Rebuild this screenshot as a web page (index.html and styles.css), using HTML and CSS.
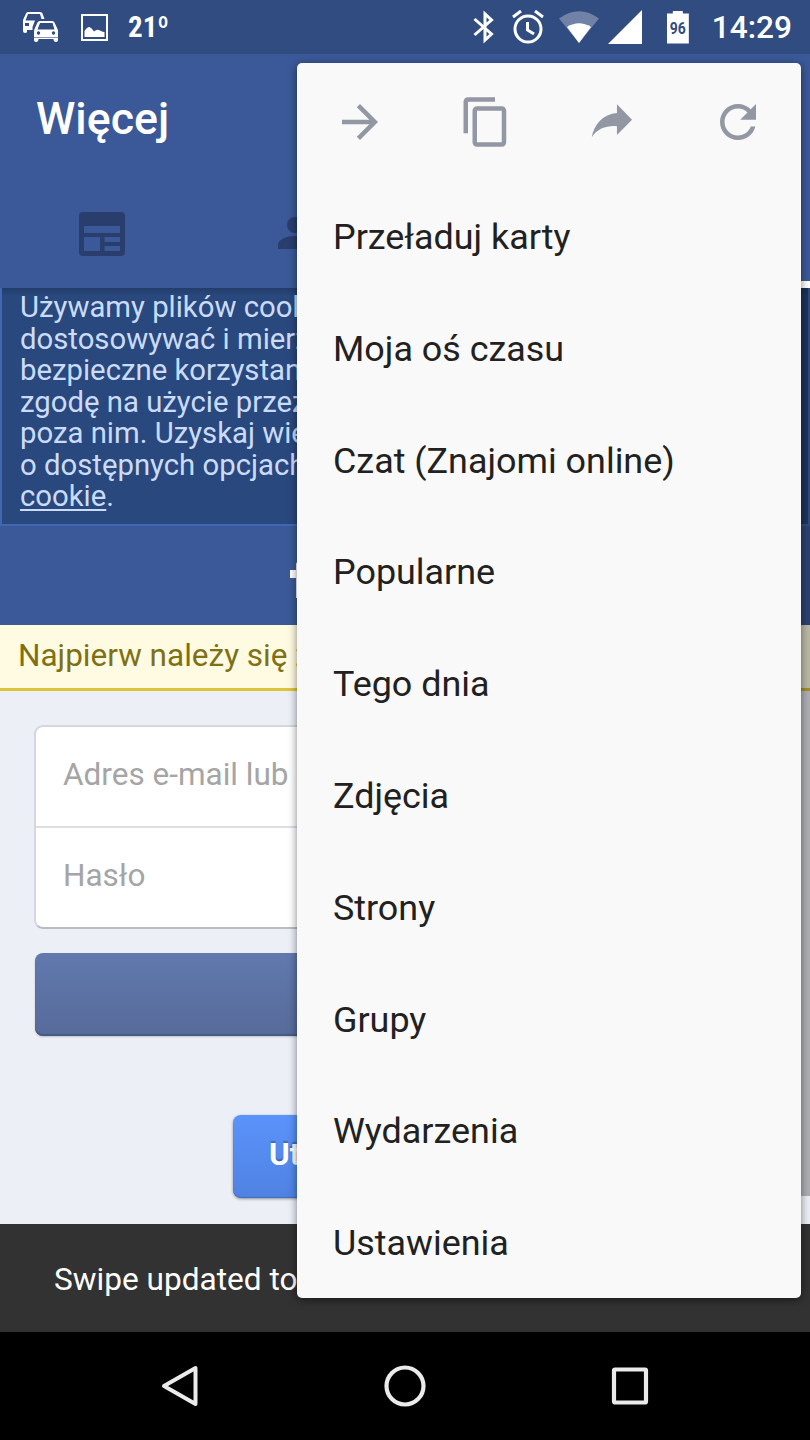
FILE: index.html
```html
<!DOCTYPE html>
<html lang="pl">
<head>
  <meta charset="UTF-8" />
  <meta name="viewport" content="width=device-width, initial-scale=1.0" />
  <title>Więcej</title>
  <link rel="stylesheet" href="styles.css">
</head>
<body>
  <div class="screen">
    <header class="status-bar">
      <div class="status-left">
        <svg class="icon-cars" width="38" height="32" viewBox="0 0 38 32">
          <path fill="#fff" fill-rule="evenodd" d="M1 8 L4 1.500 Q4.500 0 6 0 H18 Q20 0 20.500 1.500 L22.500 7 H19.500 L18 2 H6 L3.500 8.500 H13 L10.500 15 V18 H5 V20 Q4.500 21 3 21 Q1 21 1 19 Z M3 11 V14 H7 V11 Z"/>
          <path fill="#fff" fill-rule="evenodd" d="M12.500 17 L15.500 10.500 Q16 9 18 9 H30 Q32 9 32.500 10.500 L35.500 17 Q36 18 36 19 V28 Q36 30 34 30 Q31.500 30 31.500 27 H16.500 Q16.500 30 14 30 Q12 30 12 28 V19 Z M18 11 L15.500 17.500 H32.500 L30.500 11 Z"/>
          <circle cx="16.500" cy="21" r="1.700" fill="#314c80"/>
          <circle cx="31.500" cy="21" r="1.700" fill="#314c80"/>
          <path d="M12 25.500H36" stroke="#8797b8" stroke-width="1"/>
        </svg>
        <svg class="icon-photo" width="27" height="27" viewBox="0 0 27 27">
          <rect x="1" y="1" width="25" height="25" fill="none" stroke="#fff" stroke-width="2"/>
          <path fill="#fff" d="M3.500 23V17Q6 13 8.500 13 11 14 13 17.500 16 14.500 19 16.500 22 18 23.500 18V23Z"/>
        </svg>
        <span class="temperature">21º</span>
      </div>
      <div class="status-right">
        <svg class="icon-bt" width="22" height="34" viewBox="0 0 22 34">
          <path d="M1.500 9 L18.500 24 L12 30 V4 L18.500 10 L1.500 25" fill="none" stroke="#fff" stroke-width="3"/>
        </svg>
        <svg class="icon-alarm" width="32" height="34" viewBox="0 0 32 34">
          <circle cx="16" cy="19" r="13" fill="none" stroke="#fff" stroke-width="3"/>
          <path d="M15.500 12V20L22 24M1 7L9 1M23 1L31 7" fill="none" stroke="#fff" stroke-width="3"/>
        </svg>
        <svg class="icon-wifi" width="40" height="32" viewBox="0 0 40 32">
          <path fill="#7082a6" d="M0 7.500Q20 -7 40 7.500L20 32Z"/>
          <path fill="#fff" d="M8 16Q20 8.500 32 16L20 32Z"/>
        </svg>
        <svg class="icon-signal" width="34" height="34" viewBox="0 0 34 34">
          <path fill="#fff" d="M34 0V34H0Z"/>
        </svg>
        <div class="battery"><span class="battery-level">96</span></div>
        <span class="clock">14:29</span>
      </div>
    </header>

    <div class="toolbar">
      <h1>Więcej</h1>
      <div class="tabs">
        <svg class="tab" width="46" height="44" viewBox="0 0 46 44">
          <path fill="#293e6c" fill-rule="evenodd" d="M4 0H42Q46 0 46 4V40Q46 44 42 44H4Q0 44 0 40V4Q0 0 4 0ZM5 14V21H41V14ZM5 25V39H21V25ZM25.500 25V30H41V25ZM25.500 34V39H41V34Z"/>
        </svg>
        <svg class="tab" width="46" height="34" viewBox="0 0 46 34">
          <circle cx="17" cy="8" r="8" fill="#293e6c"/>
          <path fill="#293e6c" d="M0 32V27Q3 19 17 19T34 27V32Z"/>
        </svg>
      </div>
      <div class="tab-indicator"></div>
    </div>

    <div class="cookies">
      Używamy plików cook<br>
      dostosowywać i mierz<br>
      bezpieczne korzystan<br>
      zgodę na użycie przez<br>
      poza nim. Uzyskaj wię<br>
      o dostępnych opcjach<br>
      <a class="cookie-link">cookie</a>.
    </div>

    <div class="brand">
      <svg width="20" height="40" viewBox="0 0 20 40">
        <path fill="#fff" d="M0 10H6V4Q7 0 12 0H18V8H14V10H18V18H14V38H6V18H0Z"/>
      </svg>
    </div>

    <div class="notice">Najpierw należy się z</div>

    <main class="login">
      <div class="fields">
        <div class="field">Adres e-mail lub</div>
        <div class="field">Hasło</div>
      </div>
      <div class="login-button"></div>
      <div class="create-button">Ut</div>
    </main>

    <div class="snackbar">Swipe updated to</div>

    <nav class="nav-bar">
      <svg width="46" height="46" viewBox="0 0 46 46">
        <path d="M38.500 5V41L7 23Z" fill="none" stroke="#ebebeb" stroke-width="4" stroke-linejoin="round"/>
      </svg>
      <svg width="46" height="46" viewBox="0 0 46 46">
        <circle cx="23" cy="23" r="18.500" fill="none" stroke="#ebebeb" stroke-width="4.200"/>
      </svg>
      <svg width="46" height="46" viewBox="0 0 46 46">
        <rect x="7" y="6.500" width="32" height="33" rx="1" fill="none" stroke="#ebebeb" stroke-width="4.200" stroke-linejoin="round"/>
      </svg>
    </nav>

    <div class="scrollbar"></div>

    <div class="menu">
      <div class="menu-actions">
        <svg width="54" height="54" viewBox="0 0 24 24">
          <path fill="#9297a4" d="M12 4l-1.410 1.410L16.170 11H4v2h12.170l-5.580 5.590L12 20l8-8z"/>
        </svg>
        <svg width="54" height="54" viewBox="0 0 24 24">
          <path fill="#9297a4" d="M16 1H4c-1.100 0-2 .9-2 2v14h2V3h12V1zm3 4H8c-1.100 0-2 .9-2 2v14c0 1.100.9 2 2 2h11c1.100 0 2-.9 2-2V7c0-1.100-.9-2-2-2zm0 16H8V7h11v14z"/>
        </svg>
        <svg width="54" height="54" viewBox="0 0 24 24">
          <path fill="#9297a4" d="M14.200 4.100l6.700 6.900-6.700 6.800V13.900C9.800 13.500 5.600 14.800 3 18.800 4 13 8 8.500 14.200 8z"/>
        </svg>
        <svg width="54" height="54" viewBox="0 0 24 24">
          <path fill="#9297a4" d="M17.650 6.350C16.200 4.900 14.210 4 12 4c-4.420 0-7.990 3.580-7.990 8s3.570 8 7.990 8c3.730 0 6.840-2.550 7.730-6h-2.080c-.82 2.330-3.040 4-5.650 4-3.310 0-6-2.690-6-6s2.690-6 6-6c1.660 0 3.140.69 4.220 1.780L13 11h7V4l-2.350 2.350z"/>
        </svg>
      </div>
      <div class="menu-item">Przeładuj karty</div>
      <div class="menu-item">Moja oś czasu</div>
      <div class="menu-item">Czat (Znajomi online)</div>
      <div class="menu-item">Popularne</div>
      <div class="menu-item">Tego dnia</div>
      <div class="menu-item">Zdjęcia</div>
      <div class="menu-item">Strony</div>
      <div class="menu-item">Grupy</div>
      <div class="menu-item">Wydarzenia</div>
      <div class="menu-item">Ustawienia</div>
    </div>
  </div>
</body>
</html>
```

FILE: styles.css
```css
* {
  box-sizing: border-box;
}

body {
  margin: 0;
  font-family: Roboto, sans-serif;
}

svg {
  display: block;
  flex-shrink: 0;
}

.screen {
  position: relative;
  display: flex;
  flex-direction: column;
  width: 810px;
  height: 1440px;
  overflow: hidden;
  background: #eceff6;
}

/* Status bar */
.status-bar {
  display: flex;
  justify-content: space-between;
  height: 54px;
  padding: 0 18px 0 22px;
  background: #314c80;
  color: #fff;
}

.status-left,
.status-right {
  display: flex;
  align-items: center;
}

.icon-cars {
  margin-top: 2px;
}

.icon-photo {
  margin-left: 21px;
}

.temperature {
  margin-left: 20px;
  font-family: "Roboto Condensed", Roboto, sans-serif;
  font-size: 29px;
  font-weight: 700;
}

.icon-alarm {
  margin-left: 17px;
}

.icon-wifi {
  margin-left: 15px;
}

.icon-signal {
  margin-left: 9px;
}

.battery {
  width: 22px;
  height: 33px;
  margin-left: 25px;
  background: #fff;
  clip-path: polygon(0 3px, 6px 3px, 6px 0, 16px 0, 16px 3px, 100% 3px, 100% 100%, 0 100%);
  color: #314c80;
  font-size: 17px;
  font-weight: 700;
  line-height: 34px;
  text-align: center;
}

.battery-level {
  display: inline-block;
  transform: scaleX(0.82);
}

.clock {
  margin-left: 23px;
  font-size: 31.6px;
  font-weight: 500;
}

/* Toolbar and tabs */
.toolbar {
  display: flex;
  flex-direction: column;
  height: 234px;
  background: #3b5998;
}

.toolbar h1 {
  height: 126px;
  margin: 0;
  padding-left: 36px;
  color: #fff;
  font-size: 44.7px;
  font-weight: 500;
  line-height: 130px;
}

.tabs {
  display: flex;
  align-items: center;
  flex: 1;
  gap: 153px;
  padding: 6px 0 0 79px;
}

.tab-indicator {
  align-self: flex-end;
  width: 202px;
  height: 7px;
  background: #fff;
}

/* Login page */
.cookies {
  height: 238px;
  padding: 4px 18px 0;
  border: 2px solid #4267b2;
  border-top: 0;
  background: linear-gradient(#223d6b, #29487d 8px);
  color: #cbdcfb;
  font-size: 29.3px;
  line-height: 31.5px;
}

.cookie-link {
  text-decoration: underline;
  text-decoration-thickness: 2px;
  text-decoration-skip-ink: none;
  text-underline-offset: 3px;
}

.brand {
  height: 99px;
  padding: 34px 0 0 290px;
  background: #3b5998;
}

.notice {
  height: 66px;
  padding-left: 18px;
  border-bottom: 3px solid #dcc637;
  background: #fffbe2;
  color: #7e7014;
  font-size: 31.5px;
  line-height: 61px;
}

.login {
  display: flex;
  flex-direction: column;
  height: 533px;
  padding: 34px 34px 0;
}

.fields {
  height: 204px;
  border: 2px solid #d4d7dd;
  border-bottom-color: #b9bcc4;
  border-radius: 9px;
  background: #fff;
}

.field {
  height: 99px;
  padding-left: 27px;
  color: #a5a5a5;
  font-size: 31.5px;
  line-height: 95px;
}

.field + .field {
  border-top: 2px solid #dddfe2;
}

.login-button {
  height: 83px;
  margin: 24px 0 0 1px;
  border-radius: 8px;
  background: linear-gradient(#6179ae, #576b9a);
  box-shadow: inset 0 -2px 1px #475a85, 0 1px 2px rgba(0, 0, 0, 0.2);
}

.create-button {
  width: 344px;
  height: 83px;
  margin: 79px auto 0;
  padding-left: 36px;
  border-radius: 8px;
  background: linear-gradient(#5b93fb, #4f82e2);
  box-shadow: inset 0 -1px 1px #416dbf, 0 1px 3px rgba(0, 0, 0, 0.4);
  color: #fff;
  font-size: 31.5px;
  font-weight: 700;
  line-height: 80px;
  text-shadow: 0 -2px 1px rgba(0, 0, 0, 0.25);
}

.snackbar {
  height: 108px;
  padding-left: 54px;
  background: #323232;
  color: #fff;
  font-size: 31.6px;
  line-height: 112px;
}

.nav-bar {
  display: flex;
  align-items: center;
  justify-content: center;
  gap: 179px;
  height: 108px;
  background: #000;
}

.scrollbar {
  position: absolute;
  top: 288px;
  right: 0;
  width: 9px;
  height: 908px;
  background: rgba(0, 0, 0, 0.27);
}

/* Overflow menu */
.menu {
  position: absolute;
  top: 63px;
  left: 297px;
  width: 504px;
  height: 1235px;
  overflow: hidden;
  border-radius: 5px;
  background: #f9f9f9;
  box-shadow: 0 2px 8px rgba(0, 0, 0, 0.5);
}

.menu-actions {
  display: flex;
  justify-content: space-around;
  align-items: center;
  height: 117px;
}

.menu-item {
  height: 111.8px;
  padding-left: 36px;
  color: #212121;
  font-size: 35.9px;
  line-height: 115px;
}
```
